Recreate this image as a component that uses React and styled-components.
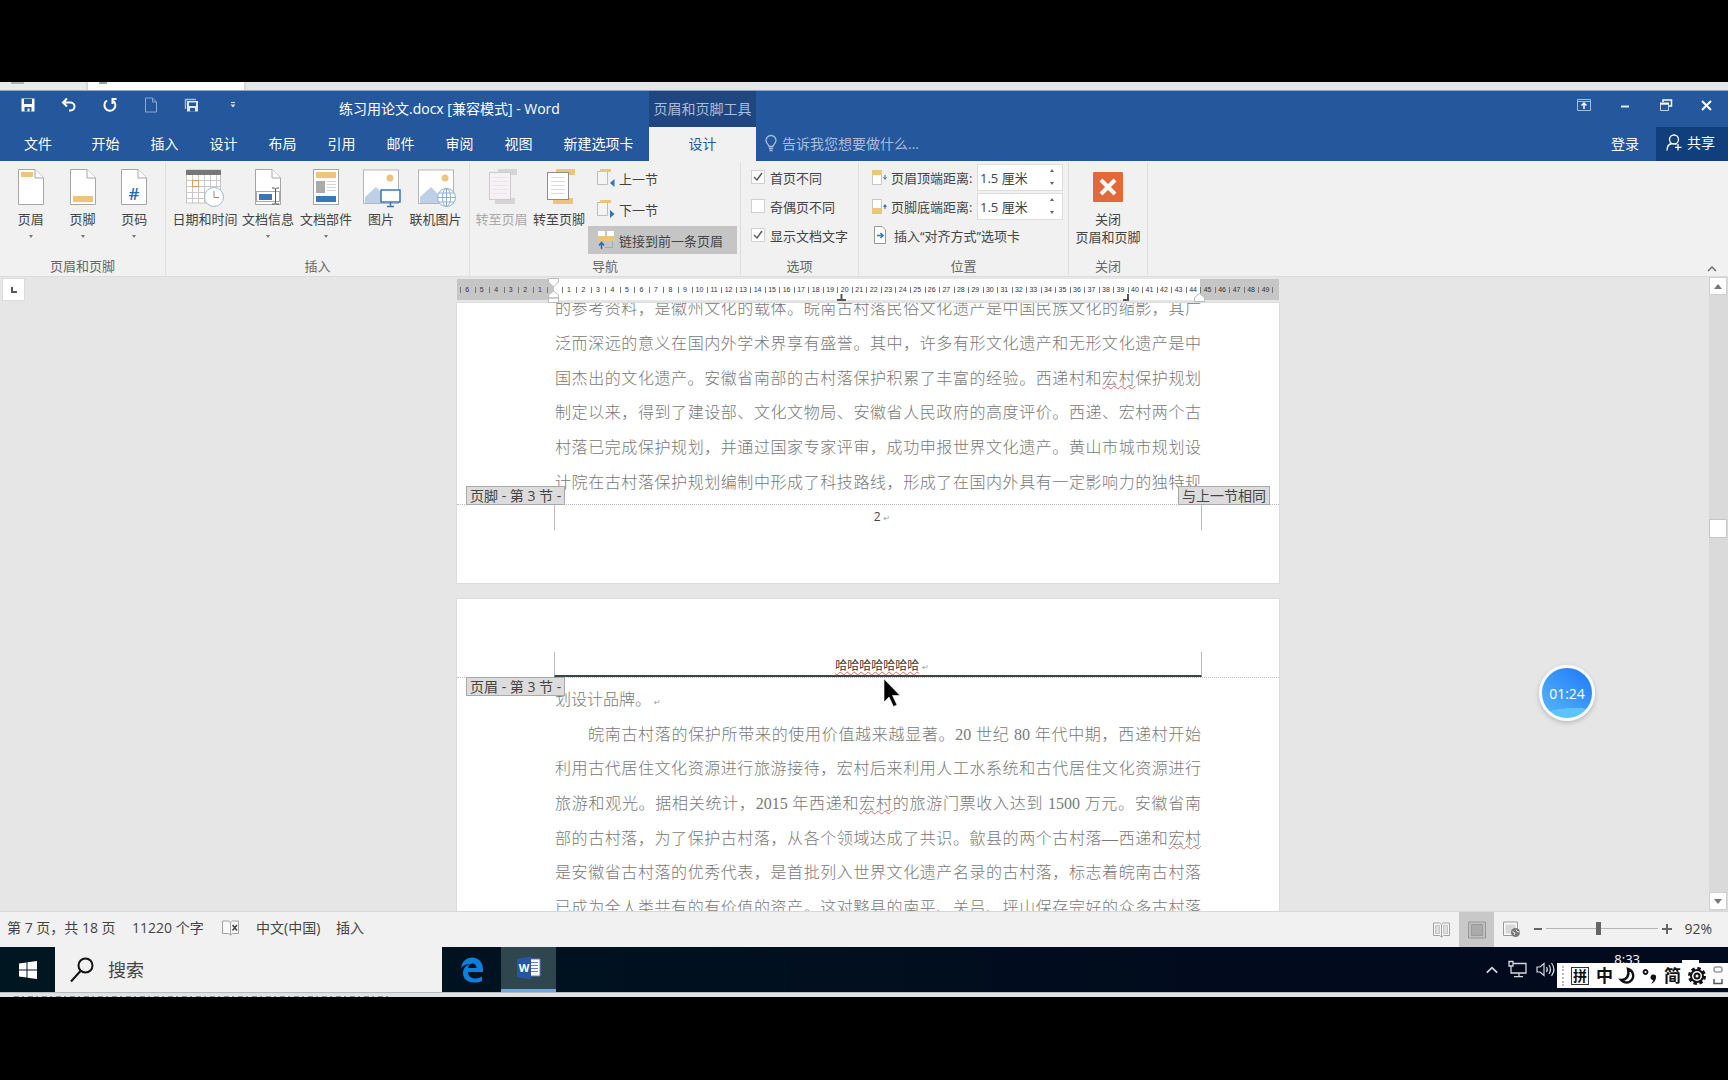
import React from "react";
import styled, { createGlobalStyle } from "styled-components";

const GlobalStyle = createGlobalStyle`
  * {
    box-sizing: border-box;
  }
  body {
    margin: 0;
    background: #000;
    font-family: "Open Sans", "Noto Sans CJK SC", sans-serif;
    font-size: 13px;
    color: #444;
  }
  button, input {
    font: inherit;
    color: inherit;
    border: none;
    background: none;
    padding: 0;
    margin: 0;
  }
  svg {
    display: block;
    flex: none;
    overflow: visible;
  }
  p {
    margin: 0;
  }
`;

const Screen = styled.div`
  display: flex;
  flex-direction: column;
  height: 100vh;
  padding: 82px 0 83px;
  overflow: hidden;
`;

/* ---------- strips of the windows behind ---------- */

const BackTabs = styled.div`
  flex: none;
  display: flex;
  height: 9px;
  background: #e4e6e7;
  border-bottom: 1px solid #8fa6cc;
`;
const BackTab = styled.div`
  width: ${(p) => p.$w}px;
  padding-left: 11px;
  background: ${(p) => (p.$active ? "#fff" : "#e9eaea")};
  border-right: 2px solid #d6d8d8;
`;
const BackTabIcon = styled.div`
  width: ${(p) => (p.$active ? 8 : 13)}px;
  height: 2px;
  background: ${(p) => (p.$active ? "#8fae84" : "#b0b0b0")};
`;
const BackStrip = styled.div`
  flex: none;
  height: 5px;
  padding: 3px 0 0 14px;
  background: #dfe3e5;
  border-top: 1px solid #b5bbbf;
`;
const BackText = styled.div`
  width: 375px;
  height: 1px;
  background: repeating-linear-gradient(
    90deg,
    #8b8f92 0 5px,
    transparent 5px 8px,
    #8b8f92 8px 10px,
    transparent 10px 14px
  );
`;

/* ---------- title bar and tabs ---------- */

const Header = styled.header`
  flex: none;
  background: #24579c;
  color: #fff;
`;
const TitleRow = styled.div`
  display: flex;
  height: 36px;
`;
const QuickAccess = styled.div`
  display: flex;
  width: 339px;
  padding-left: 7px;
`;
const QuickButton = styled.button`
  display: flex;
  align-items: center;
  justify-content: center;
  width: 41px;
  height: 28px;
`;
const DocTitle = styled.div`
  width: 310px;
  line-height: 35px;
  font-size: 14px;
  white-space: nowrap;
`;
const ToolLabel = styled.div`
  width: 107px;
  background: #1f467f;
  color: #a9bddb;
  line-height: 35px;
  font-size: 14px;
  text-align: center;
  white-space: nowrap;
`;
const WindowButtons = styled.div`
  display: flex;
  margin: 0 1px 0 auto;
`;
const TabRow = styled.nav`
  display: flex;
  height: 34px;
`;
const Tab = styled.button`
  width: ${(p) => p.$w || 59}px;
  height: 34px;
  padding-bottom: 2px;
  font-size: 14px;
  line-height: 31px;
  color: ${(p) => (p.$active ? "#24579c" : "#fff")};
  background: ${(p) => (p.$active ? "#f1f1f1" : "transparent")};
`;
const TellMe = styled.label`
  display: flex;
  align-items: center;
  gap: 5px;
  flex: 1;
  padding: 0 0 2px 9px;
  color: #a9bddb;
  input {
    width: 200px;
    font-size: 14px;
  }
  input::placeholder {
    color: #a9bddb;
    opacity: 1;
  }
`;
const Share = styled.button`
  display: flex;
  align-items: center;
  gap: 5px;
  width: 72px;
  padding: 0 0 4px 10px;
  background: #113f7b;
  font-size: 14px;
`;

/* ---------- ribbon ---------- */

const Ribbon = styled.section`
  flex: none;
  display: flex;
  height: 116px;
  padding-top: 2px;
  background: #f1f1f1;
  border-bottom: 1px solid #dcdcdc;
`;
const GroupBox = styled.div`
  display: flex;
  flex-direction: column;
  width: ${(p) => p.$w}px;
  height: 112px;
  border-right: 1px solid #dcdcdc;
`;
const GroupBody = styled.div`
  display: flex;
  height: 95px;
  padding: 0 ${(p) => p.$pad || 0}px;
`;
const GroupName = styled.div`
  line-height: 18px;
  text-align: center;
  color: #666;
`;
const Big = styled.button`
  display: flex;
  flex-direction: column;
  align-items: center;
  width: ${(p) => p.$w || 52}px;
  padding-top: 6px;
  color: ${(p) => (p.$off ? "#a9a9a9" : "#444")};
  line-height: 18px;
  white-space: nowrap;
  svg:first-child {
    margin-bottom: 5px;
  }
`;
const Caret = styled.span`
  margin-top: 7px;
  border: 2px solid transparent;
  border-top: 3px solid #777;
  border-bottom: none;
`;
const Stack = styled.div`
  display: flex;
  flex-direction: column;
  flex: 1;
  gap: ${(p) => p.$gap || 0}px;
  padding-top: ${(p) => p.$top || 0}px;
`;
const Small = styled.button`
  display: flex;
  align-items: center;
  gap: ${(p) => p.$gap || 4}px;
  height: ${(p) => p.$h || 28}px;
  padding-left: ${(p) => p.$left || 0}px;
  background: ${(p) => (p.$on ? "#c5c5c5" : "transparent")};
  white-space: nowrap;
`;
const Check = styled.label`
  display: flex;
  align-items: center;
  gap: 5px;
  height: 26px;
  padding-left: 10px;
  white-space: nowrap;
  input {
    appearance: none;
    width: 14px;
    height: 14px;
    background: #fff;
    border: 1px solid #d0d0d0;
  }
  input:checked {
    background: #fff
      url("data:image/svg+xml,%3Csvg xmlns='http://www.w3.org/2000/svg' viewBox='0 0 12 12'%3E%3Cpath d='M2 6l3 3 5-7' fill='none' stroke='%23555' stroke-width='1.4'/%3E%3C/svg%3E");
  }
`;
const Distance = styled.div`
  display: flex;
  align-items: center;
  height: 26px;
  padding-left: 13px;
  label {
    width: 90px;
    padding-left: 4px;
    white-space: nowrap;
  }
`;
const SpinBox = styled.span`
  display: flex;
  align-items: center;
  width: 86px;
  height: 27px;
  padding: 0 5px 0 2px;
  background: #fff;
  border: 1px solid #dedede;
  input {
    width: 68px;
  }
`;
const Collapse = styled.button`
  margin: auto 11px 3px auto;
`;

/* ---------- workspace ---------- */

const Workspace = styled.main`
  position: relative;
  flex: 1;
  min-height: 0;
  display: flex;
  background: #e6e6e6;
`;
const Gutter = styled.div`
  width: 27px;
  padding: 1px 2px;
`;
const TabKind = styled.button`
  display: flex;
  align-items: center;
  justify-content: center;
  width: 23px;
  height: 23px;
  background: #fff;
  border: 1px solid #dcdcdc;
`;
const Canvas = styled.div`
  flex: 1;
  display: flex;
  flex-direction: column;
  align-items: center;
  overflow: hidden;
`;
const RulerBar = styled.div`
  position: relative;
  z-index: 2;
  flex: none;
  display: flex;
  width: 822px;
  height: 21px;
  margin: 2px 0 3px;
  padding: 0 6px 0 3px;
  background: linear-gradient(
    90deg,
    #c6c6c6 97px,
    #fff 97px,
    #fff 743px,
    #c6c6c6 743px
  );
  font: 7px/21px "Liberation Sans", sans-serif;
  color: #333;
`;
const RulerCell = styled.span`
  flex: 1 1 0;
  min-width: 0;
  text-align: center;
  background: linear-gradient(#777, #777) 0 8px / 1px 6px no-repeat;
`;
const RulerMark = styled.span`
  position: absolute;
  left: ${(p) => p.$x}px;
  top: ${(p) => p.$y}px;
`;
const Page = styled.article`
  position: relative;
  flex: ${(p) => (p.$rest ? "1 0 auto" : "none")};
  width: 822px;
  height: ${(p) => (p.$h ? p.$h + "px" : "auto")};
  margin-bottom: 16px;
  background: #fff;
  box-shadow: 0 0 0 1px #dcdcdc;
`;
const PageClip = styled.div`
  overflow: hidden;
  padding: 0 78px 0 98px;
  height: ${(p) => p.$h}px;
`;
const Lines = styled.div`
  display: grid;
  grid-auto-rows: 1fr;
  align-items: center;
  height: ${(p) => p.$h}px;
  margin-top: ${(p) => p.$shift || 0}px;
  font-family: "Liberation Serif", "Noto Sans CJK SC", serif;
  font-weight: 300;
  font-size: 16px;
  line-height: 24px;
  color: #787878;
`;
const Line = styled.p`
  padding-left: ${(p) => (p.$indent ? 33 : 0)}px;
  text-align: justify;
  text-align-last: ${(p) => (p.$end ? "left" : "justify")};
  white-space: nowrap;
`;
const Typo = styled.span`
  text-decoration: underline wavy #e2675f 1px;
  text-underline-offset: 1px;
`;
const Mark = styled.span`
  margin-left: 3px;
  font: 8px "DejaVu Sans", sans-serif;
  color: #999;
`;
const FooterZone = styled.footer`
  position: relative;
  height: 26px;
  margin-top: 4px;
  padding: 0 77px 0 97px;
  border-top: 1px dotted #bbb;
`;
const FooterText = styled.div`
  height: 25px;
  border: solid #bbb;
  border-width: 0 1px;
  padding: 3px 0 0 8px;
  text-align: center;
  font-size: 12px;
  line-height: 18px;
  color: #444;
`;
const HeaderZone = styled.header`
  position: relative;
  height: 79px;
  padding: 53px 77px 0 97px;
  border-bottom: 1px dotted #bbb;
`;
const HeaderText = styled.div`
  height: 25px;
  border: solid #bbb;
  border-width: 0 1px;
  padding: 5px 0 0 8px;
  text-align: center;
  font-size: 12px;
  line-height: 18px;
  color: #333;
  border-bottom: 2px solid #3d4442;
`;
const Tag = styled.span`
  position: absolute;
  z-index: 1;
  ${(p) => (p.$right ? "right: 9px;" : "left: 9px;")}
  ${(p) => (p.$below ? "top: 100%;" : "bottom: 100%;")}
  height: 19px;
  padding: 0 3px;
  background: #dcdcdc;
  border: 1px solid #a9a9a9;
  font-size: 14px;
  line-height: 17px;
  color: #444;
  white-space: nowrap;
`;
const Pointer = styled.svg`
  position: absolute;
  left: 426px;
  top: 79px;
  z-index: 3;
`;
const ScrollBar = styled.div`
  display: flex;
  flex-direction: column;
  width: 19px;
  padding: 0 1px 1px 0;
  background: #dadada;
`;
const ScrollButton = styled.button`
  display: flex;
  align-items: center;
  justify-content: center;
  height: 18px;
  background: #fff;
  border: 1px solid #d0d0d0;
`;
const ScrollTrack = styled.div`
  flex: 1;
  padding-top: 224px;
`;
const ScrollThumb = styled.div`
  height: 19px;
  background: #fff;
  border: 1px solid #c6c6c6;
`;
const Timer = styled.div`
  position: absolute;
  right: 133px;
  top: 388px;
  display: flex;
  align-items: center;
  justify-content: center;
  width: 56px;
  height: 56px;
  border: 3px solid #f4fbff;
  border-radius: 50%;
  background:
    radial-gradient(ellipse 34px 10px at 65% 100%, #5cc4fb 98%, transparent),
    linear-gradient(220deg, #1f77f8, #3f9cf8 55%, #56baf8);
  box-shadow: 0 2px 5px rgba(0, 0, 0, 0.2);
  color: #fff;
  font-size: 14px;
`;

/* ---------- status bar ---------- */

const StatusBar = styled.footer`
  flex: none;
  display: flex;
  align-items: center;
  height: 36px;
  padding-left: 7px;
  background: #f1f1f1;
  border-top: 1px solid #d8d8d8;
  font-size: 14px;
  line-height: 30px;
  white-space: nowrap;
`;
const StatusItem = styled.span`
  width: ${(p) => p.$w}px;
  padding-bottom: 3px;
`;
const ViewButton = styled.button`
  display: flex;
  align-items: center;
  justify-content: center;
  width: 35px;
  height: 35px;
  background: ${(p) => (p.$on ? "#c8c8c8" : "transparent")};
`;
const Zoom = styled.div`
  display: flex;
  align-items: center;
  gap: 4px;
  margin-left: auto;
  padding: 0 16px 2px 0;
  output {
    margin-left: 8px;
  }
`;
const Views = styled.div`
  display: flex;
  margin-left: auto;
  & + ${Zoom} {
    margin-left: 5px;
  }
`;
const ZoomSlider = styled.input`
  appearance: none;
  width: 112px;
  height: 14px;
  background: linear-gradient(#b5b5b5, #b5b5b5) 0 50% / 100% 1px no-repeat;
  &::-webkit-slider-thumb {
    appearance: none;
    width: 5px;
    height: 13px;
    background: #666;
  }
`;

/* ---------- taskbar ---------- */

const Taskbar = styled.footer`
  position: relative;
  flex: none;
  display: flex;
  height: 45px;
  background: linear-gradient(90deg, #001721, #010b1d 70%);
`;
const TaskButton = styled.button`
  display: flex;
  align-items: center;
  justify-content: center;
  width: ${(p) => p.$w}px;
  background: ${(p) => (p.$on ? "#30464f" : "transparent")};
  border-bottom: ${(p) => (p.$on ? "3px solid #6ea9dc" : "none")};
`;
const SearchBox = styled.label`
  display: flex;
  align-items: center;
  gap: 14px;
  width: 387px;
  padding-left: 15px;
  background: #f1f1f1;
  input {
    width: 280px;
    font-size: 18px;
  }
  input::placeholder {
    color: #444;
    opacity: 1;
  }
`;
const Tray = styled.div`
  display: flex;
  align-items: center;
  gap: 9px;
  margin-left: auto;
  padding-right: 173px;
`;
const Clock = styled.time`
  position: absolute;
  right: 88px;
  top: 4px;
  color: #fff;
  font-size: 13px;
  line-height: 16px;
`;
const Notice = styled.span`
  position: absolute;
  right: 29px;
  top: 13px;
  width: 17px;
  height: 6px;
  background: #fff;
`;
const ImeBar = styled.div`
  position: absolute;
  right: 0;
  top: 16px;
  display: flex;
  align-items: center;
  gap: 7px;
  width: 171px;
  height: 25px;
  padding: 0 5px;
  background: #fff;
  color: #111;
  font-size: 17px;
  font-weight: 700;
  line-height: 25px;
`;
const ImeGrip = styled.span`
  height: 20px;
  border-left: 2px dotted #bbb;
`;
const ImeMode = styled.span`
  width: 18px;
  height: 18px;
  border: 1px solid #333;
  font-size: 14px;
  line-height: 16px;
  text-align: center;
`;

/* ---------- drawings ---------- */

const Sheet = ({ children }) => (
  <svg width="26" height="36" viewBox="0 0 26 36">
    <path d="M.5 .5H17L25.5 9V35.5H.5Z" fill="#fff" stroke="#a6a6a6" />
    <path d="M17 .5V9H25.5" fill="#fff" stroke="#a6a6a6" />
    {children}
  </svg>
);
const HeaderIcon = () => (
  <Sheet>
    <rect x="3" y="3" width="12" height="5" fill="#ecc47c" />
  </Sheet>
);
const FooterIcon = () => (
  <Sheet>
    <rect x="3" y="27" width="20" height="6" fill="#ecc47c" />
  </Sheet>
);
const NumberIcon = () => (
  <Sheet>
    <text x="13" y="31" textAnchor="middle" fontSize="17" fontWeight="600" fill="#2f69ab">
      #
    </text>
  </Sheet>
);
const DateIcon = () => (
  <svg width="38" height="36" viewBox="0 0 38 36">
    <rect x=".5" y="1" width="34" height="33" fill="#fff" stroke="#c4c4c4" />
    <rect y="1" width="35" height="5" fill="#777" />
    <path
      d="M.5 11.5H34M.5 17.5H34M.5 23.5H34M.5 29.5H34M6.5 6V34M12.5 6V34M18.5 6V34M24.5 6V34M30.5 6V34"
      stroke="#c9c9c9"
    />
    <rect x="6.500" y="11.5" width="6" height="6" fill="none" stroke="#e59a5d" />
    <circle cx="28" cy="28" r="9.5" fill="#fff" stroke="#9dbbd6" />
    <path d="M28 22V28.5H33" fill="none" stroke="#8a8a8a" />
  </svg>
);
const DocInfoIcon = () => (
  <Sheet>
    <rect x="1.5" y="22.5" width="23" height="10" fill="#fff" stroke="#aaa" />
    <rect x="4" y="25" width="13" height="6" fill="#3c77b5" />
    <path
      d="M17 19H19.5L20.5 20L21.5 19H24M20.5 20V34M17 35H19.5L20.5 34L21.5 35H24"
      fill="none"
      stroke="#555"
    />
  </Sheet>
);
const PartsIcon = () => (
  <svg width="26" height="36" viewBox="0 0 26 36">
    <rect x=".5" y=".5" width="25" height="35" fill="#fff" stroke="#a6a6a6" />
    <rect x="3" y="3" width="20" height="6" fill="#ecc47c" />
    <rect x="3" y="12" width="9" height="12" fill="#ababab" />
    <path d="M14 12.5H23M14 15.5H23M14 18.5H23M14 21.5H23" stroke="#d5d5d5" />
    <rect x="3" y="27" width="20" height="6" fill="#3c77b5" />
  </svg>
);
const Photo = ({ children }) => (
  <svg width="40" height="36" viewBox="-2 0 40 36">
    <rect x=".5" y="1" width="35" height="33.5" fill="#fff" stroke="#b5b5b5" />
    <circle cx="27" cy="9" r="3.5" fill="#ecc47c" />
    <path d="M2 34V28L13 18L22 27V34Z" fill="#bdd0e6" />
    {children}
  </svg>
);
const PictureIcon = () => (
  <Photo>
    <rect x="18" y="21" width="19" height="12" fill="#fff" stroke="#3c77b5" strokeWidth="1.5" />
    <path d="M27.5 33V37M24 37.5H31" stroke="#3c77b5" strokeWidth="1.5" />
  </Photo>
);
const OnlinePictureIcon = () => (
  <Photo>
    <circle cx="28.5" cy="28.5" r="9" fill="#fff" stroke="#8fb2d3" />
    <ellipse cx="28.5" cy="28.5" rx="4" ry="9" fill="none" stroke="#8fb2d3" />
    <path d="M19.5 28.5H37.5M21 24H36M21 33H36M28.5 19.5V37.5" stroke="#8fb2d3" />
  </Photo>
);
const GoToIcon = ({ off }) => (
  <svg width="31" height="36" viewBox="-3 0 31 36">
    <rect x="9" width="19" height="6" fill={off ? "#d5d5d5" : "#ecc47c"} />
    <rect x="6" y="29" width="20" height="6" fill={off ? "#d5d5d5" : "#ecc47c"} />
    <rect
      x=".5"
      y="3.5"
      width="21"
      height="27"
      fill={off ? "#f6f1f4" : "#fff"}
      stroke={off ? "#cfc9cc" : "#8e8e8e"}
    />
    <path
      d="M4 8.5H18M4 12.5H18M4 16.5H18M4 20.5H18M4 24.5H18"
      stroke={off ? "#ebe4e8" : "#ddd"}
    />
  </svg>
);
const SectionIcon = ({ next }) => (
  <svg width="18" height="20" viewBox="0 0 18 20">
    <path d="M.5 3.5H10.5V16.5H.5Z" fill="#f4f4f4" stroke="#bdbdbd" />
    <rect x="3" y="1" width="11" height="3" fill="#ecc47c" />
    <path d={next ? "M13 11V19L17.5 15Z" : "M17.5 11V19L13 15Z"} fill="#2f75b8" />
  </svg>
);
const LinkIcon = () => (
  <svg width="18" height="20" viewBox="0 0 18 20">
    <rect x="1" y="1" width="7" height="6" fill="#fff" />
    <rect x="10" y="1" width="7" height="6" fill="#fff" />
    <rect x="1" y="6" width="16" height="5" fill="#ecc47c" />
    <path d="M4.5 19V13M2 15.5L4.5 12.5L7 15.5" stroke="#2f69ab" strokeWidth="1.5" fill="none" />
    <path d="M8 17.5H15.5V11" stroke="#96adbf" fill="none" />
  </svg>
);
const EdgeIcon = ({ bottom }) => (
  <svg width="15" height="15" viewBox="0 0 15 15">
    <rect x=".5" y=".5" width="9" height="14" fill="#fff" stroke="#c6c6c6" />
    <rect y={bottom ? 9 : 0} width="10" height="5" fill="#ecc47c" />
    <path
      d={bottom ? "M11 8L13 5L15 8ZM12.5 7H13.5V10H12.5Z" : "M11 7L13 10L15 7ZM12.5 5H13.5V8H12.5Z"}
      fill="#2f69ab"
    />
  </svg>
);
const AlignIcon = () => (
  <svg width="14" height="18" viewBox="0 0 14 18">
    <path d="M1.5 .5H9L12.5 4V17.5H1.5Z" fill="#fff" stroke="#999" />
    <path d="M4 9.5H10M7.5 7L10 9.5L7.5 12" stroke="#2f75b8" strokeWidth="1.5" fill="none" />
  </svg>
);
const CloseIcon = () => (
  <svg width="30" height="36" viewBox="0 0 30 36">
    <rect y="3" width="30" height="30" rx="1" fill="#e2693a" />
    <path d="M8 11L22 25M22 11L8 25" stroke="#fff" strokeWidth="4" />
  </svg>
);
const SpinArrows = () => (
  <svg width="8" height="18" viewBox="0 0 8 18">
    <path d="M2 4L4 1L6 4ZM2 14L4 17L6 14Z" fill="#666" />
  </svg>
);
const SaveIcon = () => (
  <svg width="14" height="14" viewBox="0 0 14 14">
    <path d="M.5 .5H13.5V13.5H.5Z" fill="#fff" />
    <path d="M3 1H11V6H3ZM3.5 9H10.5V13.5H8.5V10.5H6.5V13.5H3.5Z" fill="#24579c" />
  </svg>
);
const UndoIcon = () => (
  <svg width="14" height="14" viewBox="0 0 14 14">
    <path
      d="M5 .5L1 4.5L5 8.5M1.5 4.5H8.5A4 4 0 0 1 8.5 12.5H7"
      fill="none"
      stroke="#fff"
      strokeWidth="2"
    />
  </svg>
);
const RedoIcon = () => (
  <svg width="14" height="14" viewBox="0 0 14 14">
    <path
      d="M4 2.5A5.500 5.500 0 1 0 10.500 3M13.5 1H9.5V6"
      fill="none"
      stroke="#fff"
      strokeWidth="2"
    />
  </svg>
);
const NewIcon = () => (
  <svg width="12" height="16" viewBox="0 0 12 16">
    <path d="M.5 1H7.5L11.5 5V15H.5ZM7.5 1V5H11.5" fill="none" stroke="#8ba9d2" />
  </svg>
);
const SaveAllIcon = () => (
  <svg width="15" height="14" viewBox="0 0 15 14">
    <path d="M1.5 11V1.5H12" fill="none" stroke="#a9bddb" strokeWidth="1.5" />
    <path d="M3 3H14V13.5H3Z" fill="#dfe8f4" />
    <path d="M5 4.5H12V8H5ZM6 10H11V13.5H6Z" fill="#24579c" />
  </svg>
);
const MoreIcon = () => (
  <svg width="6" height="6" viewBox="0 0 6 6">
    <path d="M1 0H5V1H1ZM.5 2.5H5.5L3 5.5Z" fill="#d6e0ee" />
  </svg>
);
const RibbonOptionsIcon = () => (
  <svg width="14" height="12" viewBox="0 0 14 12">
    <path d="M.5 .5H13.5V11.5H.5ZM.5 2.5H13.5" fill="none" stroke="#a9bddb" />
    <path d="M7 10V4.5M4.5 6.5L7 4L9.5 6.5" stroke="#fff" strokeWidth="1.5" fill="none" />
  </svg>
);
const MinIcon = () => (
  <svg width="8" height="10" viewBox="0 0 8 10">
    <path d="M0 6.500H8" stroke="#dfe8f4" strokeWidth="2" />
  </svg>
);
const RestoreIcon = () => (
  <svg width="12" height="12" viewBox="0 0 12 12">
    <path d="M3 3V1H11.5V7H9" fill="none" stroke="#fff" strokeWidth="1.5" />
    <path d="M.5 5H8.5V11.5H.5Z" fill="none" stroke="#c4d3e8" />
    <path d="M0 4.5H9" stroke="#fff" strokeWidth="2" />
  </svg>
);
const ExitIcon = () => (
  <svg width="11" height="11" viewBox="0 0 11 11">
    <path d="M1 1L10 10M10 1L1 10" stroke="#fff" strokeWidth="2" />
  </svg>
);
const BulbIcon = () => (
  <svg width="12" height="17" viewBox="0 0 12 17">
    <path
      d="M4 11.5C4 9.5 1 8.5 1 5.5A5 5 0 0 1 11 5.500C11 8.5 8 9.5 8 11.5ZM4 13.5H8M4.5 15.5H7.5"
      fill="none"
      stroke="#a9bddb"
      strokeWidth="1.3"
    />
  </svg>
);
const PersonIcon = () => (
  <svg width="16" height="17" viewBox="0 0 16 17">
    <circle cx="8" cy="5.5" r="4.5" fill="none" stroke="#fff" strokeWidth="1.3" />
    <path
      d="M1 16.5C1 12 3 10 6 9.5M9 9.5L10.5 10.5M12 10V16.5M9 13.3H15.5"
      fill="none"
      stroke="#fff"
      strokeWidth="1.3"
    />
  </svg>
);
const Chevron = ({ color = "#666", w = 10 }) => (
  <svg width={w} height="9" viewBox="0 0 10 7">
    <path d="M1 6L5 2L9 6" fill="none" stroke={color} strokeWidth="1.3" />
  </svg>
);
const Book = ({ children }) => (
  <svg width="17" height="16" viewBox="0 0 17 16">
    <path
      d="M8.5 2.5L6.5 1H.5V13.5H6.5L8.5 15L10.5 13.5H16.5V1H10.5L8.5 2.5V15"
      fill="#f8f8f8"
      stroke="#a2a2a2"
    />
    {children}
  </svg>
);
const ProofIcon = () => (
  <Book>
    <path d="M10.5 5L15 10.5M15 5L10.5 10.5" stroke="#444" strokeWidth="1.5" />
  </Book>
);
const ReadIcon = () => (
  <Book>
    <path d="M2.5 3.5H6.5V11.5H2.5ZM10.5 3.5H14.5V11.5H10.5Z" fill="#ddd" stroke="#c4c4c4" />
  </Book>
);
const PrintIcon = () => (
  <svg width="18" height="18" viewBox="0 0 18 18">
    <path d="M.5 1H17.5V17H.5Z" fill="#c0c0c0" stroke="#969696" />
    <path d="M3.5 3.5H14.5V14.5H3.5Z" fill="#aaa" stroke="#999" />
  </svg>
);
const WebIcon = () => (
  <svg width="18" height="17" viewBox="0 0 18 17">
    <path d="M.5 1H14.5V14.5H.5Z" fill="#f8f8f8" stroke="#999" />
    <path d="M2.5 3.5H12.5V12.5H2.5Z" fill="#d8d8d8" />
    <circle cx="12.5" cy="11.5" r="4.5" fill="#777" />
    <path d="M9.5 10.5L12 12L11 14M13 8.5L14 10.5L16.5 11" stroke="#eee" fill="none" />
  </svg>
);
const WindowsIcon = () => (
  <svg width="18" height="18" viewBox="0 0 18 18">
    <path
      d="M0 2.5L7.5 1.5V8.5H0ZM8.5 1.3L18 0V8.5H8.5ZM0 9.5H7.5V16.5L0 15.5ZM8.5 9.5H18V18L8.5 16.7Z"
      fill="#fff"
    />
  </svg>
);
const SearchIcon = () => (
  <svg width="24" height="26" viewBox="0 0 24 26">
    <circle cx="15.5" cy="8.5" r="7" fill="none" stroke="#111" strokeWidth="2" />
    <path d="M10.5 14L1 24.5" stroke="#111" strokeWidth="2" />
  </svg>
);
const BrowserIcon = () => (
  <svg width="24" height="26" viewBox="0 0 24 26">
    <path
      d="M1 11C2 4 7 .5 12 .5C19 .5 23 6 23 12V15H8C8 19 11 21.5 15 21.5C18 21.5 20 20.5 22 19.5V24C20 25 17 25.5 14 25.5C7 25.5 3 21.5 3 16C3 11.5 6 8.5 9.5 7C6 7.2 3 8.5 1 11ZM8 11H16.5C16.5 8.5 15 6.5 12.5 6.5C10 6.5 8.5 8.5 8 11Z"
      fill="#0d7fdc"
    />
  </svg>
);
const WordIcon = () => (
  <svg width="24" height="24" viewBox="0 0 24 24">
    <path d="M13 3H23V20H13Z" fill="#fff" stroke="#5b82be" />
    <path d="M14 6.5H21M14 9.5H21M14 12.5H21M14 15.5H21" stroke="#5b82be" />
    <path d="M0 3L14 .5V23.5L0 21Z" fill="#2456a3" />
    <text x="7" y="16" textAnchor="middle" fontSize="11" fontWeight="700" fill="#fff">
      W
    </text>
  </svg>
);
const NetworkIcon = () => (
  <svg width="19" height="17" viewBox="0 0 19 17">
    <path
      d="M5 2.5H18V12H3V6M11 12V15.5M6 15.7H15M1 .5H5V5H1ZM3 5V8"
      fill="none"
      stroke="#d5d8dd"
      strokeWidth="1.3"
    />
  </svg>
);
const SpeakerIcon = () => (
  <svg width="19" height="17" viewBox="0 0 19 17">
    <path
      d="M1 6H4L8 2.5V14.5L4 11H1ZM10.5 6C11.5 7.5 11.5 9.5 10.5 11M13 4C15 7 15 10 13 13M15.5 2C18.5 6 18.5 11 15.5 15"
      fill="none"
      stroke="#d5d8dd"
      strokeWidth="1.2"
    />
  </svg>
);
const MoonIcon = () => (
  <svg width="15" height="16" viewBox="0 0 15 16">
    <path
      d="M8 1C14 3 15 10 10 13.5C7 15.5 3 14.5 1 12C7 12.5 9.5 7 8 1Z"
      fill="#fff"
      stroke="#111"
      strokeWidth="2.4"
    />
  </svg>
);
const PunctIcon = () => (
  <svg width="15" height="16" viewBox="0 0 15 16">
    <circle cx="3.5" cy="4" r="2" fill="none" stroke="#111" strokeWidth="1.8" />
    <path
      d="M8.500 9A2.800 2.800 0 1 1 14 10C13.500 13 11.500 15 9 16C10.500 14 11 13 11 12A2.800 2.800 0 0 1 8.500 9Z"
      fill="#111"
    />
  </svg>
);
const GearIcon = () => (
  <svg width="18" height="18" viewBox="0 0 18 18">
    <circle cx="9" cy="9" r="7.5" fill="none" stroke="#111" strokeWidth="3" strokeDasharray="3.4 2.5" />
    <circle cx="9" cy="9" r="6" fill="none" stroke="#111" strokeWidth="2" />
    <circle cx="9" cy="9" r="2.5" fill="none" stroke="#111" strokeWidth="2" />
  </svg>
);
const ImeMoreIcon = () => (
  <svg width="10" height="18" viewBox="0 0 10 18">
    <rect x="1" y="0" width="8" height="5" rx="2" fill="none" stroke="#999" strokeWidth="1.5" />
    <path d="M1 12V16.5H9V12" fill="none" stroke="#555" strokeWidth="1.5" />
  </svg>
);

const tabs = ["开始", "插入", "设计", "布局", "引用", "邮件", "审阅", "视图"];
const rulerNumbers = [6, 5, 4, 3, 2, 1, ""].concat(
  Array.from({ length: 49 }, (_, i) => i + 1)
);

const Group = ({ name, w, pad, children }) => (
  <GroupBox $w={w}>
    <GroupBody $pad={pad}>{children}</GroupBody>
    <GroupName>{name}</GroupName>
  </GroupBox>
);

const BigButton = ({ icon, label, w, caret, off }) => (
  <Big $w={w} $off={off} disabled={off}>
    {icon}
    <span>{label}</span>
    {caret && <Caret />}
  </Big>
);

const TopBar = () => (
  <Header>
    <TitleRow>
      <QuickAccess>
        <QuickButton aria-label="保存"><SaveIcon /></QuickButton>
        <QuickButton aria-label="撤消"><UndoIcon /></QuickButton>
        <QuickButton aria-label="恢复"><RedoIcon /></QuickButton>
        <QuickButton aria-label="新建"><NewIcon /></QuickButton>
        <QuickButton aria-label="全部保存"><SaveAllIcon /></QuickButton>
        <QuickButton aria-label="自定义"><MoreIcon /></QuickButton>
      </QuickAccess>
      <DocTitle>练习用论文.docx [兼容模式] - Word</DocTitle>
      <ToolLabel>页眉和页脚工具</ToolLabel>
      <WindowButtons>
        <QuickButton aria-label="功能区选项"><RibbonOptionsIcon /></QuickButton>
        <QuickButton aria-label="最小化"><MinIcon /></QuickButton>
        <QuickButton aria-label="还原"><RestoreIcon /></QuickButton>
        <QuickButton aria-label="关闭窗口"><ExitIcon /></QuickButton>
      </WindowButtons>
    </TitleRow>
    <TabRow>
      <Tab $w={76}>文件</Tab>
      {tabs.map((t) => (
        <Tab key={t}>{t}</Tab>
      ))}
      <Tab $w={101}>新建选项卡</Tab>
      <Tab $w={107} $active>设计</Tab>
      <TellMe>
        <BulbIcon />
        <input aria-label="告诉我" placeholder="告诉我您想要做什么..." />
      </TellMe>
      <Tab $w={62}>登录</Tab>
      <Share>
        <PersonIcon />
        共享
      </Share>
    </TabRow>
  </Header>
);

const Tools = () => (
  <Ribbon>
    <Group name="页眉和页脚" w={166} pad={5}>
      <BigButton icon={<HeaderIcon />} label="页眉" caret />
      <BigButton icon={<FooterIcon />} label="页脚" caret />
      <BigButton icon={<NumberIcon />} label="页码" caret />
    </Group>
    <Group name="插入" w={304} pad={5}>
      <BigButton icon={<DateIcon />} label="日期和时间" w={68} />
      <BigButton icon={<DocInfoIcon />} label="文档信息" w={58} caret />
      <BigButton icon={<PartsIcon />} label="文档部件" w={58} caret />
      <BigButton icon={<PictureIcon />} label="图片" w={52} />
      <BigButton icon={<OnlinePictureIcon />} label="联机图片" w={57} />
    </Group>
    <Group name="导航" w={271} pad={3}>
      <BigButton icon={<GoToIcon off />} label="转至页眉" w={57} off />
      <BigButton icon={<GoToIcon />} label="转至页脚" w={58} />
      <Stack $top={1} $gap={3}>
        <Small $left={9}><SectionIcon />上一节</Small>
        <Small $left={9}><SectionIcon next />下一节</Small>
        <Small $left={9} $on><LinkIcon />链接到前一条页眉</Small>
      </Stack>
    </Group>
    <Group name="选项" w={118}>
      <Stack $top={1} $gap={3}>
        <Check><input type="checkbox" defaultChecked />首页不同</Check>
        <Check><input type="checkbox" />奇偶页不同</Check>
        <Check><input type="checkbox" defaultChecked />显示文档文字</Check>
      </Stack>
    </Group>
    <Group name="位置" w={210}>
      <Stack $top={1} $gap={3}>
        <Distance>
          <EdgeIcon />
          <label htmlFor="top">页眉顶端距离:</label>
          <SpinBox>
            <input id="top" defaultValue="1.5 厘米" />
            <SpinArrows />
          </SpinBox>
        </Distance>
        <Distance>
          <EdgeIcon bottom />
          <label htmlFor="bottom">页脚底端距离:</label>
          <SpinBox>
            <input id="bottom" defaultValue="1.5 厘米" />
            <SpinArrows />
          </SpinBox>
        </Distance>
        <Small $left={14} $gap={7} $h={26}><AlignIcon />插入“对齐方式”选项卡</Small>
      </Stack>
    </Group>
    <Group name="关闭" w={79}>
      <Big $w={78}>
        <CloseIcon />
        <span>关闭<br />页眉和页脚</span>
      </Big>
    </Group>
    <Collapse aria-label="折叠功能区"><Chevron /></Collapse>
  </Ribbon>
);

const Ruler = () => (
  <RulerBar>
    {rulerNumbers.map((n, i) => (
      <RulerCell key={i}>{n}</RulerCell>
    ))}
    <RulerMark $x={91} $y={-1}>
      <svg width="11" height="25" viewBox="0 0 11 25">
        <path
          d="M.5 .5H10.5V4L5.5 9L.5 4ZM.5 20V17L5.5 13L10.5 17V20ZM.5 20H10.5V24.5H.5Z"
          fill="#fff"
          stroke="#bbb"
        />
      </svg>
    </RulerMark>
    <RulerMark $x={380} $y={15}>
      <svg width="9" height="7" viewBox="0 0 9 7">
        <path d="M4.5 0V6M0 6H9" stroke="#555" strokeWidth="2" />
      </svg>
    </RulerMark>
    <RulerMark $x={666} $y={15}>
      <svg width="6" height="7" viewBox="0 0 6 7">
        <path d="M5 0V6M0 6H6" stroke="#555" strokeWidth="2" />
      </svg>
    </RulerMark>
    <RulerMark $x={737} $y={14}>
      <svg width="11" height="9" viewBox="0 0 11 9">
        <path d="M.5 8.5V4.5L5.5 .5L10.5 4.5V8.5Z" fill="#fff" stroke="#bbb" />
      </svg>
    </RulerMark>
    <RulerMark $x={815} $y={8}>
      <svg width="1" height="6" viewBox="0 0 1 6">
        <path d="M.5 0V6" stroke="#777" />
      </svg>
    </RulerMark>
  </RulerBar>
);

const Pages = () => (
  <Canvas>
    <Ruler />
    <Page $h={280}>
      <PageClip $h={197}>
        <Lines $h={208} $shift={-11}>
          <Line>的参考资料，是徽州文化的载体。皖南古村落民俗文化遗产是中国民族文化的缩影，其广</Line>
          <Line>泛而深远的意义在国内外学术界享有盛誉。其中，许多有形文化遗产和无形文化遗产是中</Line>
          <Line>国杰出的文化遗产。安徽省南部的古村落保护积累了丰富的经验。西递村和<Typo>宏村</Typo>保护规划</Line>
          <Line>制定以来，得到了建设部、文化文物局、安徽省人民政府的高度评价。西递、宏村两个古</Line>
          <Line>村落已完成保护规划，并通过国家专家评审，成功申报世界文化遗产。黄山市城市规划设</Line>
          <Line>计院在古村落保护规划编制中形成了科技路线，形成了在国内外具有一定影响力的独特规</Line>
        </Lines>
      </PageClip>
      <FooterZone>
        <Tag>页脚 - 第 3 节 -</Tag>
        <Tag $right>与上一节相同</Tag>
        <FooterText>2<Mark>↵</Mark></FooterText>
      </FooterZone>
    </Page>
    <Page $rest>
      <HeaderZone>
        <HeaderText><Typo>哈哈哈哈哈哈哈</Typo><Mark>↵</Mark></HeaderText>
        <Tag $below>页眉 - 第 3 节 -</Tag>
      </HeaderZone>
      <PageClip $h={247}>
        <Lines $h={242} $shift={5}>
          <Line $end>划设计品牌。<Mark>↵</Mark></Line>
          <Line $indent>皖南古村落的保护所带来的使用价值越来越显著。20 世纪 80 年代中期，西递村开始</Line>
          <Line>利用古代居住文化资源进行旅游接待，宏村后来利用人工水系统和古代居住文化资源进行</Line>
          <Line>旅游和观光。据相关统计，2015 年西递和<Typo>宏村</Typo>的旅游门票收入达到 1500 万元。安徽省南</Line>
          <Line>部的古村落，为了保护古村落，从各个领域达成了共识。歙县的两个古村落—西递和<Typo>宏村</Typo></Line>
          <Line>是安徽省古村落的优秀代表，是首批列入世界文化遗产名录的古村落，标志着皖南古村落</Line>
          <Line>已成为全人类共有的有价值的资产。这对黟县的南平、关吕、坪山保存完好的众多古村落</Line>
        </Lines>
      </PageClip>
      <Pointer width="20" height="30" viewBox="0 0 20 30">
        <path
          d="M1 1V24L6 19L10.5 28.5L14 27L9.5 17.5H17Z"
          fill="#000"
          stroke="#fff"
          strokeWidth=".6"
        />
      </Pointer>
    </Page>
  </Canvas>
);

const Status = () => (
  <StatusBar>
    <StatusItem $w={125}>第 7 页，共 18 页</StatusItem>
    <StatusItem $w={90}>11220 个字</StatusItem>
    <StatusItem $w={34}><ProofIcon /></StatusItem>
    <StatusItem $w={80}>中文(中国)</StatusItem>
    <StatusItem>插入</StatusItem>
    <Views>
      <ViewButton aria-label="阅读视图"><ReadIcon /></ViewButton>
      <ViewButton $on aria-label="页面视图"><PrintIcon /></ViewButton>
      <ViewButton aria-label="Web 版式"><WebIcon /></ViewButton>
    </Views>
    <Zoom>
      <button aria-label="缩小">
        <svg width="8" height="10" viewBox="0 0 8 10">
          <path d="M0 5H8" stroke="#666" strokeWidth="2" />
        </svg>
      </button>
      <ZoomSlider type="range" min="0" max="100" defaultValue="46" aria-label="缩放" />
      <button aria-label="放大">
        <svg width="10" height="10" viewBox="0 0 10 10">
          <path d="M0 5H10M5 0V10" stroke="#666" strokeWidth="2" />
        </svg>
      </button>
      <output>92%</output>
    </Zoom>
  </StatusBar>
);

const Desktop = () => (
  <Taskbar>
    <TaskButton $w={55} aria-label="开始菜单"><WindowsIcon /></TaskButton>
    <SearchBox>
      <SearchIcon />
      <input aria-label="搜索" placeholder="搜索" />
    </SearchBox>
    <TaskButton $w={59} aria-label="浏览器"><BrowserIcon /></TaskButton>
    <TaskButton $w={55} $on aria-label="Word"><WordIcon /></TaskButton>
    <Tray>
      <Chevron color="#d5d8dd" w={14} />
      <NetworkIcon />
      <SpeakerIcon />
    </Tray>
    <Clock>8:33</Clock>
    <Notice />
    <ImeBar>
      <ImeGrip />
      <ImeMode>拼</ImeMode>
      <span>中</span>
      <MoonIcon />
      <PunctIcon />
      <span>简</span>
      <GearIcon />
      <ImeMoreIcon />
    </ImeBar>
  </Taskbar>
);

const App = () => (
  <>
    <GlobalStyle />
    <Screen>
      <BackTabs>
        <BackTab $w={88}><BackTabIcon /></BackTab>
        <BackTab $w={158} $active><BackTabIcon $active /></BackTab>
      </BackTabs>
      <TopBar />
      <Tools />
      <Workspace>
        <Gutter>
          <TabKind aria-label="制表符">
            <svg width="6" height="6" viewBox="0 0 6 6">
              <path d="M1 0V5H6" fill="none" stroke="#555" strokeWidth="2" />
            </svg>
          </TabKind>
        </Gutter>
        <Pages />
        <ScrollBar>
          <ScrollButton aria-label="向上滚动">
            <svg width="8" height="5" viewBox="0 0 8 5">
              <path d="M0 5L4 0L8 5Z" fill="#777" />
            </svg>
          </ScrollButton>
          <ScrollTrack>
            <ScrollThumb />
          </ScrollTrack>
          <ScrollButton aria-label="向下滚动">
            <svg width="8" height="5" viewBox="0 0 8 5">
              <path d="M0 0L4 5L8 0Z" fill="#777" />
            </svg>
          </ScrollButton>
        </ScrollBar>
        <Timer>01:24</Timer>
      </Workspace>
      <Status />
      <Desktop />
      <BackStrip>
        <BackText />
      </BackStrip>
    </Screen>
  </>
);

export default App;
